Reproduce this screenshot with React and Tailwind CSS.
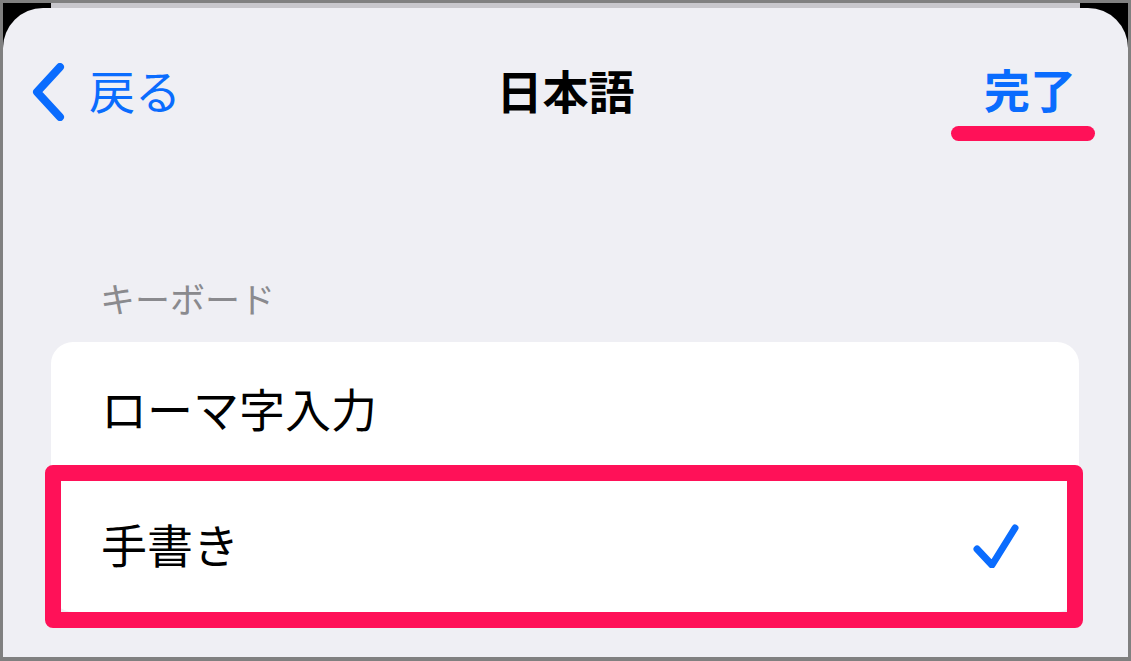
import React from "react";

const jp = { fontFamily: '"Noto Sans CJK JP", "Noto Sans", sans-serif' };

const Chevron = () => (
  <svg className="mt-[6px]" width="34" height="58" viewBox="0 0 34 58" fill="none">
    <path d="M29 4 L6 29 L29 54" stroke="#0a6cfe" strokeWidth="8" strokeLinecap="round" strokeLinejoin="round" />
  </svg>
);

const Check = () => (
  <svg width="46" height="46" viewBox="0 0 46 46" fill="none">
    <path d="M4 27 L19 43 L42 6" stroke="#0a6cfe" strokeWidth="7" strokeLinecap="round" strokeLinejoin="round" />
  </svg>
);

export default function App() {
  return (
    <div className="w-[1131px] h-[661px] bg-[#808080] pt-[3px] pl-[3px] pr-[3px] pb-[4px]" style={jp}>
      <div className="h-full bg-black flex flex-col">
        {/* sheet behind */}
        <div className="mx-[48px] h-[5px] bg-[#c8c7cc] shrink-0" />

        {/* sheet */}
        <div className="flex-1 rounded-t-[40px] bg-[#efeff4] flex flex-col">
          {/* nav bar */}
          <div className="h-[168px] pb-[6px] grid grid-cols-[1fr_auto_1fr] items-center px-[28px]">
            <div className="flex items-center gap-[24px]">
              <Chevron />
              <span className="text-[46px] leading-none text-[#0a6cfe]">戻る</span>
            </div>
            <span className="text-[46px] leading-none font-bold text-black">日本語</span>
            <div className="flex justify-end pr-[24px]">
              <div className="relative">
                <span className="text-[46px] leading-none font-bold text-[#0a6cfe]">完了</span>
                <div className="absolute left-[-33px] top-[61px] w-[144px] h-[15px] rounded-full bg-[#ff1158]" />
              </div>
            </div>
          </div>

          {/* section label */}
          <div className="mt-[104px] pl-[97px] text-[35px] leading-none text-[#8a8a8e]">キーボード</div>

          {/* list card */}
          <div className="relative mt-[27px] ml-[48px] w-[1028px] bg-white rounded-[22px]">
            <div className="h-[135px] pb-[5px] flex items-center pl-[50px] text-[46px] leading-none text-black">
              ローマ字入力
            </div>
            <div className="ml-[50px] h-px bg-[#c6c6c8]" />
            <div className="h-[134px] flex items-center justify-between pl-[50px] pr-[60px] text-[46px] leading-none text-black">
              <span className="pb-[5px]">手書き</span>
              <Check />
            </div>

            {/* highlight box */}
            <div className="absolute left-[-6px] top-[123px] w-[1038px] h-[163px] border-[16px] border-[#ff1158] rounded-[8px]" />
          </div>
        </div>
      </div>
    </div>
  );
}
